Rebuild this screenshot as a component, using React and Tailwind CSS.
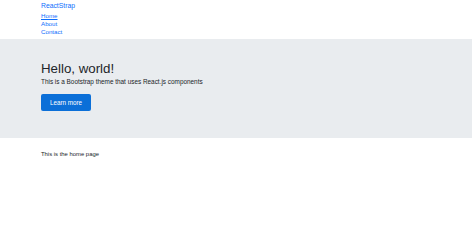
export default function App() {
  return (
    <div className="w-[474px] h-[223px] bg-white text-[#212529] font-['Liberation_Sans',Arial,sans-serif]">
      <nav className="pl-[41px] pt-[1px] flex flex-col">
        <a className="text-[6.8px] leading-[9px] text-[#0d6efd] w-max">ReactStrap</a>
        <ul className="mt-[2px] flex flex-col">
          <li className="text-[6.2px] leading-[8px]"><a className="text-[#0d6efd] underline">Home</a></li>
          <li className="text-[6.2px] leading-[8px]"><a className="text-[#0d6efd]">About</a></li>
          <li className="text-[6.2px] leading-[8px]"><a className="text-[#0d6efd]">Contact</a></li>
        </ul>
      </nav>
      <section className="mt-[3px] w-[472px] h-[99px] bg-[#e9ecef] pl-[41px] pt-[22px] flex flex-col items-start">
        <h1 className="text-[13.3px] leading-[16px] font-normal">Hello, world!</h1>
        <p className="mt-[1px] text-[6.4px] leading-[8px]">This is a Bootstrap theme that uses React.js components</p>
        <button className="mt-[8px] w-[50px] h-[17px] rounded-[2px] bg-[#0b6fd8] text-white text-[6.3px] leading-[8px] flex items-center justify-center">Learn more</button>
      </section>
      <p className="mt-[12px] pl-[41px] text-[5.9px] leading-[8px]">This is the home page</p>
    </div>
  );
}
